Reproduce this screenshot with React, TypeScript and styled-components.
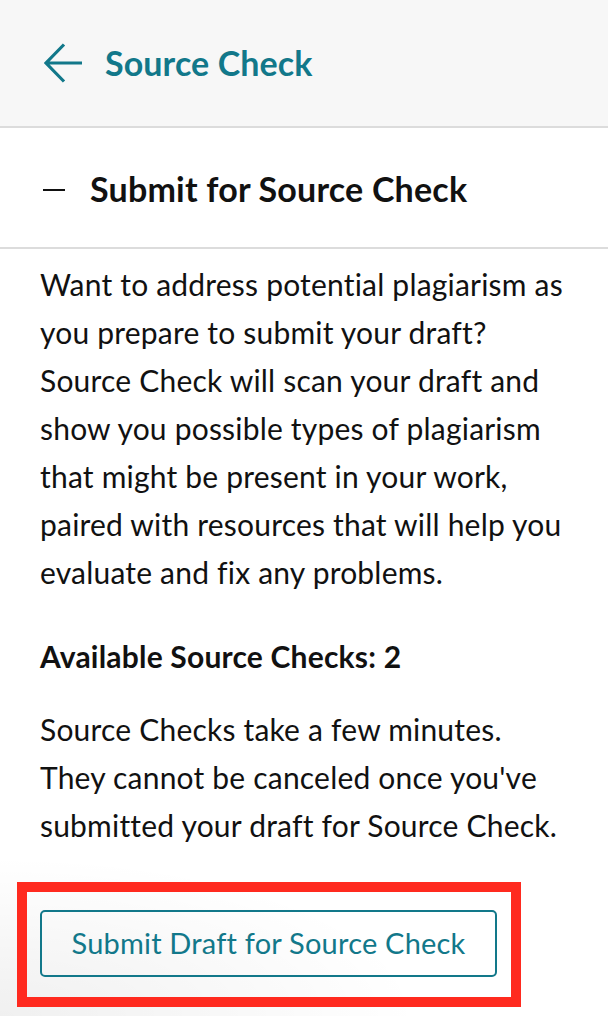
import React from 'react'
import styled, { createGlobalStyle } from 'styled-components'

const teal = '#12788a'

const GlobalStyle = createGlobalStyle`
  html, body {
    margin: 0;
    padding: 0;
    background: #ffffff;
  }
  body {
    font-family: 'Lato', 'Noto Sans', sans-serif;
    color: #111111;
    -webkit-font-smoothing: antialiased;
  }
`

const Panel = styled.div`
  width: 608px;
  height: 1016px;
  overflow: hidden;
  display: flex;
  flex-direction: column;
  background:
    radial-gradient(ellipse 420px 160px at 0% 100%, rgba(0, 0, 0, 0.06), rgba(0, 0, 0, 0) 100%),
    #ffffff;
`

const Header = styled.header`
  height: 128px;
  flex-shrink: 0;
  display: flex;
  align-items: center;
  gap: 23px;
  padding: 0 44px;
  background: #f7f7f7;
  border-bottom: 2px solid #dcdcdc;
  box-sizing: border-box;
`

const BackButton = styled.button`
  display: flex;
  align-items: center;
  padding: 0;
  border: none;
  background: none;
  color: ${teal};
  cursor: pointer;
`

const HeaderTitle = styled.h1`
  margin: 0 0 2px;
  font-size: 34px;
  font-weight: 700;
  letter-spacing: 0.1px;
  color: ${teal};
`

const SectionToggle = styled.div`
  height: 121px;
  flex-shrink: 0;
  display: flex;
  align-items: center;
  gap: 25px;
  padding: 0 43px;
  border-bottom: 2px solid #dcdcdc;
  box-sizing: border-box;
`

const Dash = styled.span`
  display: block;
  width: 22px;
  height: 2px;
  margin-top: 4px;
  background: #111111;
`

const SectionTitle = styled.h2`
  margin: 2px 0 0;
  font-size: 34px;
  font-weight: 700;
  letter-spacing: 0.2px;
  color: #111111;
`

const Body = styled.div`
  display: flex;
  flex-direction: column;
  padding: 11px 40px 0;
`

const Paragraph = styled.p`
  margin: 0;
  font-size: 30px;
  line-height: 48px;
  letter-spacing: 0.2px;
  color: #111111;
`

const Label = styled.h3`
  margin: 36px 0 25px;
  font-size: 30px;
  line-height: 48px;
  font-weight: 700;
  letter-spacing: 0.2px;
  color: #111111;
`

const Highlight = styled.div`
  align-self: flex-start;
  margin: 33px 0 0 -23px;
  padding: 18px 14px 20px 13px;
  border: 10px solid #ff2a1f;
`

const OutlineButton = styled.button`
  display: block;
  width: 457px;
  height: 67px;
  padding: 0 0 2px;
  border: 2px solid ${teal};
  border-radius: 5px;
  background: transparent;
  color: ${teal};
  font-family: inherit;
  font-size: 29px;
  letter-spacing: 0.2px;
  cursor: pointer;
`

const ArrowLeft = () => (
  <svg width='38' height='40' viewBox='0 0 38 40' fill='none'>
    <path
      d='M38 20H2M20 1.5L2 20l18 18.5'
      stroke='currentColor'
      strokeWidth='3.2'
    />
  </svg>
)

export default function App() {
  return (
    <Panel>
      <GlobalStyle />
      <Header>
        <BackButton aria-label='Back'>
          <ArrowLeft />
        </BackButton>
        <HeaderTitle>Source Check</HeaderTitle>
      </Header>
      <SectionToggle>
        <Dash />
        <SectionTitle>Submit for Source Check</SectionTitle>
      </SectionToggle>
      <Body>
        <Paragraph>
          Want to address potential plagiarism as you prepare to submit your draft? Source Check
          will scan your draft and show you possible types of plagiarism that might be present in
          your work, paired with resources that will help you evaluate and fix any problems.
        </Paragraph>
        <Label>Available Source Checks: 2</Label>
        <Paragraph>
          Source Checks take a few minutes. They cannot be canceled once you've submitted your
          draft for Source Check.
        </Paragraph>
        <Highlight>
          <OutlineButton>Submit Draft for Source Check</OutlineButton>
        </Highlight>
      </Body>
    </Panel>
  )
}
